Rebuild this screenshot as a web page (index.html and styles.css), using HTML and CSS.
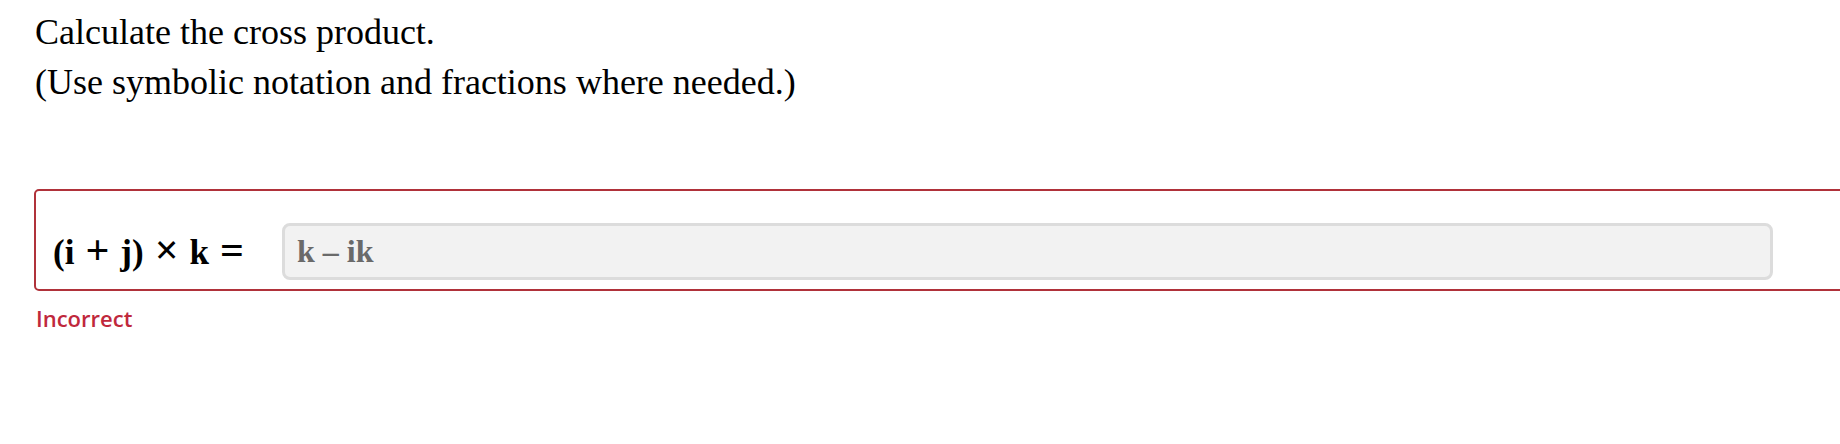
FILE: index.html
```html
<!DOCTYPE html>
<html lang="en">
<head>
<meta charset="utf-8">
<title>Cross product</title>
<link rel="stylesheet" href="styles.css">
</head>
<body>
<div class="prompt">
  <p class="line">Calculate the cross product.</p>
  <p class="line">(Use symbolic notation and fractions where needed.)</p>
</div>
<div class="answer-box">
  <div class="label">
    <span class="p">(</span><span class="v">i</span><span class="op">+</span><span class="v j">j</span><span class="p">)</span><span class="op">×</span><span class="v">k</span><span class="op eq">=</span>
  </div>
  <div class="field"><span class="field-text">k – ik</span></div>
</div>
<div class="feedback">Incorrect</div>
</body>
</html>
```

FILE: styles.css
```css
html, body {
  margin: 0;
  padding: 0;
  background: #ffffff;
  overflow: hidden;
}

body {
  width: 1840px;
  height: 444px;
  font-family: "Liberation Serif", "Times New Roman", serif;
  color: #000000;
}

.prompt {
  padding: 7px 0 0 35px;
}

.line {
  margin: 0;
  font-size: 36px;
  line-height: 50px;
}

.answer-box {
  display: flex;
  align-items: center;
  margin: 82px 0 0 34px;
  width: 1900px;
  box-sizing: border-box;
  border: 2px solid #b0323a;
  border-radius: 5px;
  padding: 32px 0 9px 17px;
}

.label {
  display: flex;
  align-items: baseline;
  width: 229px;
  font-size: 35px;
  font-weight: bold;
  white-space: nowrap;
  line-height: 40px;
}

.label .v {
  font-weight: bold;
}

.label .op {
  font-size: 42px;
  font-weight: bold;
  margin: 0 11px;
}

.label .eq {
  margin-right: 0;
}

.field {
  flex: 0 0 1491px;
  height: 57px;
  box-sizing: border-box;
  display: flex;
  align-items: center;
  background: #f2f2f2;
  border: 3px solid #dcdcdc;
  border-radius: 8px;
  padding-left: 12px;
}

.field-text {
  font-size: 32px;
  font-weight: bold;
  color: #6a6a6a;
}

.feedback {
  margin: 12px 0 0 36px;
  font-family: "Open Sans", "Liberation Sans", sans-serif;
  font-weight: 600;
  font-size: 22px;
  color: #c0283c;
}
```
